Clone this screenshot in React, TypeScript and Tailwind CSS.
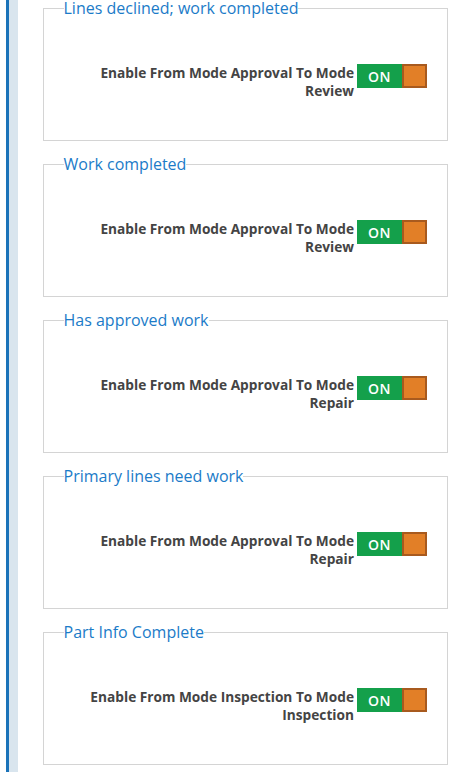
import React from 'react'

type Rule = {
  title: string
  label: string
}

const RULES: Rule[] = [
  { title: 'Lines declined; work completed', label: 'Enable From Mode Approval To Mode Review' },
  { title: 'Work completed', label: 'Enable From Mode Approval To Mode Review' },
  { title: 'Has approved work', label: 'Enable From Mode Approval To Mode Repair' },
  { title: 'Primary lines need work', label: 'Enable From Mode Approval To Mode Repair' },
  { title: 'Part Info Complete', label: 'Enable From Mode Inspection To Mode Inspection' },
]

function Toggle() {
  return (
    <div className="flex h-[24px] w-[70px] shrink-0">
      <div className="flex w-[45px] items-center bg-[#14a04b] pl-[11px] text-[14px] font-semibold tracking-[0.5px] text-white">
        ON
      </div>
      <div className="w-[25px] border-2 border-[#a85a1e] bg-[#e27f27]" />
    </div>
  )
}

function RuleBox({ rule }: { rule: Rule }) {
  return (
    <fieldset className="h-[144px] border border-[#d4d4d4] pl-[19.5px] pr-[20px]">
      <legend className="px-0 text-[16px] leading-[22px] text-[#1b7bc8]">{rule.title}</legend>
      <div className="mt-[45px] flex items-start justify-end">
        <div className="mr-[3px] w-[270px] text-right text-[13.7px] font-bold leading-[18px] text-[#444]">
          {rule.label}
        </div>
        <Toggle />
      </div>
    </fieldset>
  )
}

export default function App() {
  return (
    <div className="flex h-[772px] overflow-hidden bg-white" style={{ fontFamily: '"Open Sans", sans-serif' }}>
      <div className="w-[6px] shrink-0 bg-white" />
      <div className="w-[3px] shrink-0 bg-[#1a73b9]" />
      <div className="w-[9px] shrink-0 bg-[#d9e5ee]" />
      <div className="-mt-[3px] flex flex-1 flex-col gap-[12px] pl-[25px] pr-[8px]">
        {RULES.map((r, i) => (
          <RuleBox key={i} rule={r} />
        ))}
      </div>
    </div>
  )
}
